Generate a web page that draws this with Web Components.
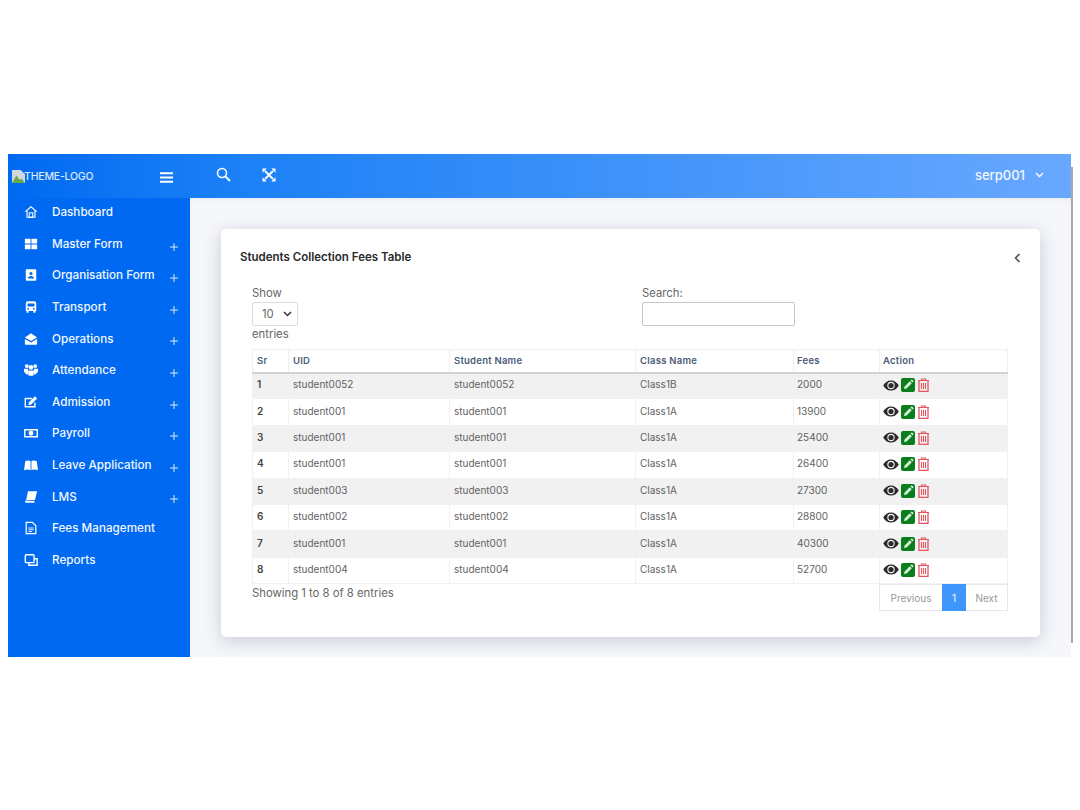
<!DOCTYPE html>
<html>
<head>
<meta charset="utf-8">
<title>Students Collection Fees Table</title>
<style>
  html, body { margin: 0; background: #fff; }
  body { font-family: Inter, "Noto Sans", sans-serif; padding: 154px 9px 0 8px; height: 656px; overflow: hidden; }
</style>
</head>
<body>
<app-shell>
  <top-bar slot="top" user="serp001"></top-bar>
  <side-nav slot="side">
    <nav-item icon="home" label="Dashboard"></nav-item>
    <nav-item icon="grid" label="Master Form" more></nav-item>
    <nav-item icon="badge" label="Organisation Form" more></nav-item>
    <nav-item icon="bus" label="Transport" more></nav-item>
    <nav-item icon="mail" label="Operations" more></nav-item>
    <nav-item icon="users" label="Attendance" more></nav-item>
    <nav-item icon="edit" label="Admission" more></nav-item>
    <nav-item icon="money" label="Payroll" more></nav-item>
    <nav-item icon="book" label="Leave Application" more></nav-item>
    <nav-item icon="lms" label="LMS" more></nav-item>
    <nav-item icon="file" label="Fees Management"></nav-item>
    <nav-item icon="copy" label="Reports"></nav-item>
  </side-nav>
  <fees-card title="Students Collection Fees Table"></fees-card>
</app-shell>

<script>
const NAV_ICONS = {
  home: '<path d="M1.500 7.500 8 2l6.500 5.500M3.500 6.500V14h9V6.500" fill="none" stroke="#fff" stroke-width="1.300"/><rect x="6" y="9" width="4" height="5" fill="none" stroke="#fff" stroke-width="1.200"/>',
  grid: '<path d="M1 2h6.500v5.500H1zM8.500 2H15v5.500H8.500zM1 8.500h6.500V14H1zM8.500 8.500H15V14H8.500z" fill="#fff"/>',
  badge: '<path fill-rule="evenodd" d="M3 1.500h10A1 1 0 0 1 14 2.500v11a1 1 0 0 1-1 1H3a1 1 0 0 1-1-1v-11a1 1 0 0 1 1-1zM8 4.500a1.800 1.800 0 1 0 0 3.600A1.800 1.800 0 0 0 8 4.500zM4.500 12h7c0-1.800-1.500-3-3.500-3s-3.500 1.200-3.500 3z" fill="#fff"/>',
  bus: '<path fill-rule="evenodd" d="M4.500 1.500h7A2.500 2.500 0 0 1 14 4v8.500h-1v2h-2.200v-2H5.200v2H3v-2H2V4a2.500 2.500 0 0 1 2.500-2.500zM4 4v3.500h8V4zM4.800 9a1.100 1.100 0 1 0 0 2.200 1.100 1.100 0 0 0 0-2.200zM11.200 9a1.100 1.100 0 1 0 0 2.200 1.100 1.100 0 0 0 0-2.200z" fill="#fff"/>',
  mail: '<path d="M1 6.200 8 1.500l7 4.700L8 10.200zM1 8 8 12l7-4v5.500a1 1 0 0 1-1 1H2a1 1 0 0 1-1-1z" fill="#fff"/>',
  users: '<circle cx="3.200" cy="3.500" r="2.200" fill="#fff"/><circle cx="12.800" cy="3.500" r="2.200" fill="#fff"/><circle cx="8" cy="5" r="2.600" fill="#fff"/><path d="M0 6.500h4.500L5 13H3L0 10zM16 6.500h-4.500L11 13h2l3-3zM4.800 8.500h6.400l-.6 6H5.400z" fill="#fff"/>',
  edit: '<path d="M12.500 8.500V13.500H1.500V4H9" fill="none" stroke="#fff" stroke-width="1.600"/><path d="M5.500 8.500 12.500 1.500 15 4 8 11 5 11.500z" fill="#fff"/>',
  money: '<path fill-rule="evenodd" d="M0 3.500h16v9.500H0zM1.700 5.200v6.100h12.600V5.200zM8 5.500a2.800 2.800 0 1 0 0 5.600 2.800 2.800 0 0 0 0-5.600z" fill="#fff"/>',
  book: '<path d="M0 14 1.500 3.500C4 2.500 6.500 2.500 7.500 3.800V14C5.500 13 2.500 13 0 14zM16 14 14.500 3.500C12 2.500 9.500 2.500 8.500 3.800V14C10.500 13 13.500 13 16 14z" fill="#fff"/>',
  lms: '<path d="M4.500 1.500H15L12.500 11.500H2.500z" fill="#fff"/><path d="M1 13a1.500 1.500 0 0 1 1.500-1L12 12.500V14.500H2.500A1.500 1.500 0 0 1 1 13z" fill="#fff"/>',
  file: '<path d="M2.500 1.500h7L13.500 5.500V14.500h-11z" fill="none" stroke="#fff" stroke-width="1.400"/><path d="M5 8h6M5 10h6M5 12h4" stroke="#fff" stroke-width="1"/>',
  copy: '<rect x="1.500" y="2" width="10" height="9" rx="1" fill="none" stroke="#fff" stroke-width="1.600"/><path d="M5.500 11V14H15V6.500H11.500" fill="none" stroke="#fff" stroke-width="1.600"/>'
};

class AppShell extends HTMLElement {
  constructor() {
    super();
    this.attachShadow({ mode: 'open' });
    this.shadowRoot.innerHTML = `
      <style>
        :host { display: grid; grid-template-columns: 182px 1fr; grid-template-rows: 44px 459px; width: 1063px; position: relative; }
        .top { grid-column: 1 / 3; }
        .side { background: #0069f1; }
        .main { background: #f6f7fb; padding: 31px 31px 20px 31px; box-shadow: inset 0 6px 8px -6px rgba(0,0,0,.08); }
        .edge { position: absolute; right: -2px; top: 13px; bottom: 14px; width: 2px; background: #a9a9ad; }
      </style>
      <div class="top"><slot name="top"></slot></div>
      <div class="side"><slot name="side"></slot></div>
      <div class="main"><slot></slot></div>
      <div class="edge"></div>`;
  }
}
customElements.define('app-shell', AppShell);

class TopBar extends HTMLElement {
  constructor() {
    super();
    this.attachShadow({ mode: 'open' });
    const user = this.getAttribute('user');
    this.shadowRoot.innerHTML = `
      <style>
        :host { display: flex; align-items: center; height: 44px; color: #fff; background: linear-gradient(to right, #0069f1 0%, #1a7ff6 20%, #68a8ff 100%); }
        .brand { width: 182px; box-sizing: border-box; display: flex; align-items: center; padding: 0 17px 0 4px; }
        .logo { display: flex; align-items: center; font-size: 10.500px; font-weight: 500; letter-spacing: -.2px; color: #dbe9fb; margin-top: 1px; }
        .logo svg { margin-right: -1px; margin-top: -1px; }
        .burger { margin-left: auto; margin-top: 3px; }
        .tools { display: flex; align-items: center; gap: 31px; padding-left: 26px; margin-top: -3px; }
        .user { margin-left: auto; display: flex; align-items: center; gap: 10px; padding-right: 27px; font-size: 13px; font-weight: 500; margin-top: -2px; color: #f2f7ff; }
      </style>
      <div class="brand">
        <span class="logo">
          <svg width="13" height="13" viewBox="0 0 12 12"><path d="M0 0h8l4 4v8H0z" fill="#cfd8dc"/><path d="M0 12 4 5l3 4 2-1 3 4z" fill="#6aa84f"/></svg>THEME-LOGO
        </span>
        <svg class="burger" width="13" height="11" viewBox="0 0 13 11"><path d="M0 1.200h13M0 5.500h13M0 9.800h13" stroke="#fff" stroke-width="1.900"/></svg>
      </div>
      <div class="tools">
        <svg width="15" height="15" viewBox="0 0 15 15"><circle cx="6" cy="6" r="4.500" fill="none" stroke="#fff" stroke-width="1.600"/><path d="m9.500 9.500 4.500 4.500" stroke="#fff" stroke-width="1.800"/></svg>
        <svg width="14" height="14" viewBox="0 0 14 14"><path d="M3 3l8 8M11 3l-8 8" stroke="#fff" stroke-width="1.800"/><path d="M.5.500h4.200L.5 4.700zM13.500.500H9.300l4.200 4.200zM.5 13.500h4.200L.5 9.300zM13.500 13.500H9.300l4.200-4.200z" fill="#fff"/></svg>
      </div>
      <div class="user">${user}
        <svg width="9" height="6" viewBox="0 0 9 6"><path d="m1 1 3.500 3.500L8 1" fill="none" stroke="#fff" stroke-width="1.400"/></svg>
      </div>`;
  }
}
customElements.define('top-bar', TopBar);

class SideNav extends HTMLElement {
  constructor() {
    super();
    this.attachShadow({ mode: 'open' });
    this.shadowRoot.innerHTML = `
      <style>:host { display: block; margin-top: -1px; }</style>
      <slot></slot>`;
  }
}
customElements.define('side-nav', SideNav);

class NavItem extends HTMLElement {
  constructor() {
    super();
    this.attachShadow({ mode: 'open' });
    const more = this.hasAttribute('more') ? '<svg class="plus" width="8" height="8" viewBox="0 0 8 8"><path d="M4 0v8M0 4h8" stroke="#dbe9fb" stroke-width="1"/></svg>' : '';
    this.shadowRoot.innerHTML = `
      <style>
        :host { display: flex; align-items: center; height: 31.600px; padding-left: 16px; color: #f2f7ff; font-size: 11.700px; font-weight: 500; box-sizing: border-box; position: relative; }
        svg.ic { width: 14px; height: 14px; margin-right: 14px; flex: none; margin-top: -1px; }
        span { margin-top: -1px; white-space: nowrap; }
        .plus { position: absolute; left: 162px; top: 14px; }
      </style>
      <svg class="ic" viewBox="0 0 16 16">${NAV_ICONS[this.getAttribute('icon')]}</svg>
      <span>${this.getAttribute('label')}</span>${more}`;
  }
}
customElements.define('nav-item', NavItem);

class ActionIcons extends HTMLElement {
  constructor() {
    super();
    this.attachShadow({ mode: 'open' });
    this.shadowRoot.innerHTML = `
      <style>:host { display: flex; align-items: center; gap: 2px; } svg { display: block; }</style>
      <svg width="16" height="11" viewBox="0 0 16 11"><path fill-rule="evenodd" d="M8 .5c3.400 0 6.200 2 7.800 5-1.600 3-4.400 5-7.800 5S1.800 8.500.2 5.500C1.800 2.500 4.600.5 8 .5zM8 1.800a3.700 3.700 0 1 0 0 7.400 3.700 3.700 0 0 0 0-7.400z" fill="#2b2b2b"/><circle cx="8" cy="5.500" r="2.600" fill="#2b2b2b"/></svg>
      <svg width="14" height="14" viewBox="0 0 14 14"><rect width="14" height="14" rx="2" fill="#0a7d1c"/><path d="M3 11l.6-2.600L8.800 3.200l2 2L5.600 10.400zM9.500 2.500l2 2 .8-.8a.7.7 0 0 0 0-1l-1-1a.7.7 0 0 0-1 0z" fill="#d7f2d9"/></svg>
      <svg width="13" height="14" viewBox="0 0 12 14"><path d="M.5 2.500h11M4 2.500V1h4v1.500" fill="none" stroke="#e9555f" stroke-width="1.200"/><path d="M1.500 3v10.300h9V3" fill="none" stroke="#e9555f" stroke-width="1.300"/><path d="M4 5v6M6 5v6M8 5v6" stroke="#e9555f" stroke-width="1.100"/></svg>`;
  }
}
customElements.define('action-icons', ActionIcons);

const FEE_ROWS = [
  ['1', 'student0052', 'student0052', 'Class1B', '2000'],
  ['2', 'student001', 'student001', 'Class1A', '13900'],
  ['3', 'student001', 'student001', 'Class1A', '25400'],
  ['4', 'student001', 'student001', 'Class1A', '26400'],
  ['5', 'student003', 'student003', 'Class1A', '27300'],
  ['6', 'student002', 'student002', 'Class1A', '28800'],
  ['7', 'student001', 'student001', 'Class1A', '40300'],
  ['8', 'student004', 'student004', 'Class1A', '52700']
];

class FeesCard extends HTMLElement {
  constructor() {
    super();
    this.attachShadow({ mode: 'open' });
    const rows = FEE_ROWS.map(r => `
      <tr>
        <td class="sr">${r[0]}</td><td>${r[1]}</td><td>${r[2]}</td><td>${r[3]}</td><td>${r[4]}</td>
        <td class="act"><action-icons></action-icons></td>
      </tr>`).join('');
    this.shadowRoot.innerHTML = `
      <style>
        :host { display: block; width: 819px; height: 408px; box-sizing: border-box; background: #fff; border-radius: 5px; box-shadow: 0 4px 18px rgba(40,50,90,.22); padding: 0 32px 0 31px; color: #666; font-size: 11.300px; position: relative; }
        h3 { margin: 0; padding-top: 21px; margin-left: -12px; font-size: 11.500px; line-height: 14px; font-weight: 600; color: #2a2a2a; }
        .back { position: absolute; right: 19px; top: 24px; }
        .controls { display: flex; margin-top: 22px; height: 63px; color: #666; }
        .len { width: 390px; line-height: 14px; }
        .sel { display: flex; align-items: center; justify-content: space-between; width: 46px; height: 24px; box-sizing: border-box; border: 1px solid #ddd; border-radius: 2px; margin: 2px 0 1px; padding: 0 5px 0 9px; }
        .find { line-height: 14px; }
        .inp { width: 153px; height: 24px; box-sizing: border-box; border: 1px solid #c8c8c8; border-radius: 2px; margin-top: 2px; }
        table { border-collapse: collapse; table-layout: fixed; width: 756px; font-size: 10px; }
        th { height: 23px; padding: 0 0 0 4px; text-align: left; font-size: 9.500px; letter-spacing: .25px; font-weight: 600; color: #4b5b78; border: 1px solid #eef0f2; border-bottom: 2px solid #cfd2d6; box-sizing: border-box; }
        td { height: 26.400px; padding: 0 0 3px 4px; color: #626262; border: 1px solid #f1f1f3; box-sizing: border-box; }
        td.act { padding-bottom: 1px; }
        th:nth-child(n+5), td:nth-child(n+5) { padding-left: 3px; }
        td.sr { font-weight: 600; color: #444; }
        tbody tr:nth-child(odd) td { background: #f1f1f1; }
        .foot { display: flex; justify-content: space-between; align-items: flex-start; }
        .info { margin-top: 2px; line-height: 14px; }
        .pages { display: flex; height: 27px; font-size: 10px; color: #999; border: 1px solid #e6e7ea; box-sizing: border-box; }
        .pages div { display: flex; align-items: center; justify-content: center; }
        .prev { width: 62px; } .next { width: 41px; }
        .cur { width: 24px; background: #3f96fb; color: #fff; margin: -1px 0; }
      </style>
      <h3>${this.getAttribute('title')}</h3>
      <svg class="back" width="7" height="10" viewBox="0 0 7 10"><path d="M5.500 1 1.500 5l4 4" fill="none" stroke="#555" stroke-width="1.700"/></svg>
      <div class="controls">
        <div class="len">Show
          <div class="sel">10 <svg width="9" height="6" viewBox="0 0 9 6"><path d="m1 1 3.500 3.500L8 1" fill="none" stroke="#333" stroke-width="1.500"/></svg></div>
          entries
        </div>
        <div class="find">Search:<div class="inp"></div></div>
      </div>
      <table>
        <colgroup><col style="width:36px"><col style="width:161px"><col style="width:186px"><col style="width:158px"><col style="width:86px"><col></colgroup>
        <thead><tr><th>Sr</th><th>UID</th><th>Student Name</th><th>Class Name</th><th>Fees</th><th>Action</th></tr></thead>
        <tbody>${rows}</tbody>
      </table>
      <div class="foot">
        <div class="info">Showing 1 to 8 of 8 entries</div>
        <div class="pages"><div class="prev">Previous</div><div class="cur">1</div><div class="next">Next</div></div>
      </div>`;
  }
}
customElements.define('fees-card', FeesCard);
</script>
</body>
</html>
